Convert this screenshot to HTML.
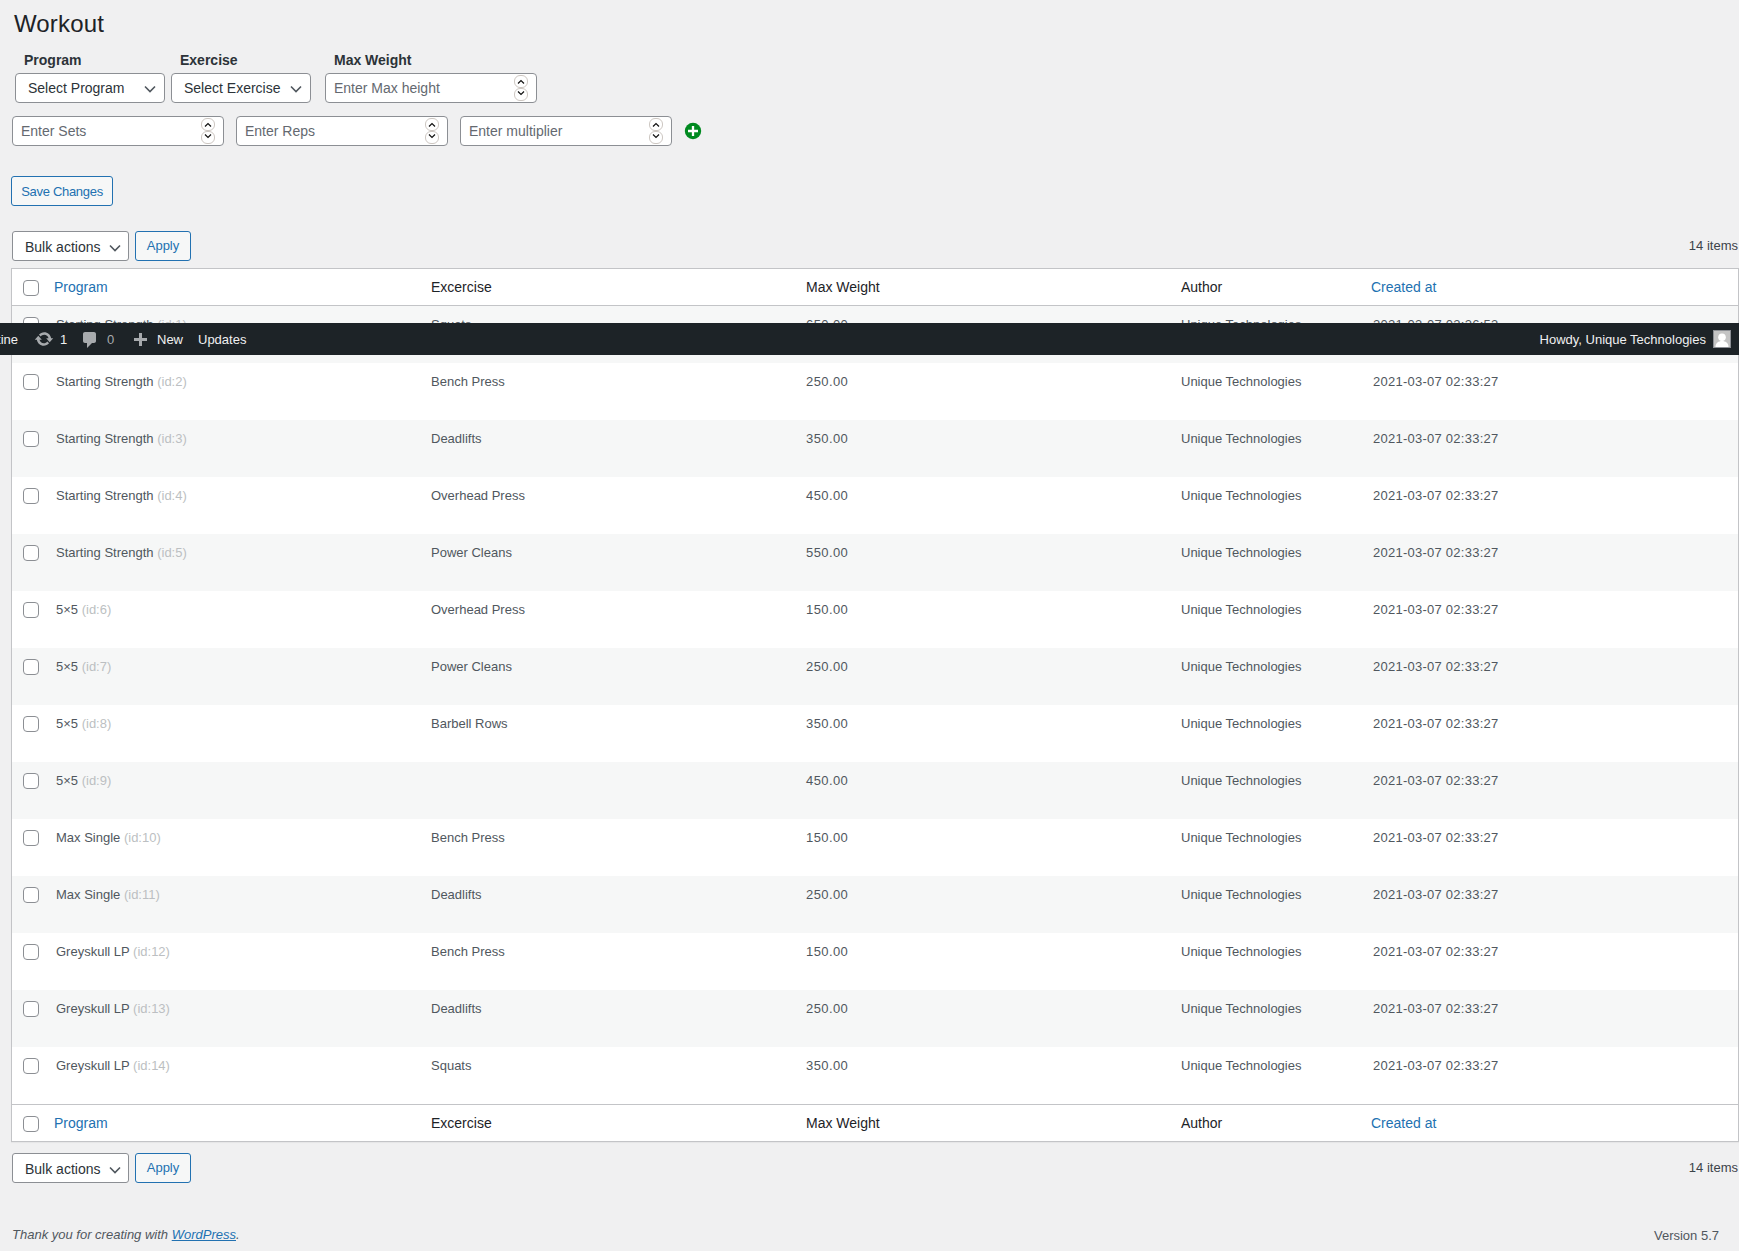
<!DOCTYPE html>
<html><head><meta charset="utf-8">
<style>
*{box-sizing:border-box;margin:0;padding:0}
html,body{width:1739px;height:1251px;overflow:hidden;background:#f0f0f1;font-family:"Liberation Sans",sans-serif;color:#3c434a;font-size:13px}
.abs{position:absolute}
h1{position:absolute;left:14px;top:9px;font-size:24px;letter-spacing:0.15px;font-weight:400;color:#1d2327;line-height:29px}
.lbl{position:absolute;top:51px;font-size:14px;font-weight:700;color:#2c3338;line-height:18px}
.sel{position:absolute;background:#fff;border:1px solid #8c8f94;border-radius:4px;color:#2c3338;font-size:14px;line-height:28px;padding-left:12px}
.sel svg{position:absolute;right:8px;top:11px}
.inp{position:absolute;background:#fff;border:1px solid #8c8f94;border-radius:4px;color:#646970;font-size:14px;line-height:28px;padding-left:8px}
.spin{position:absolute;width:14px;height:13px;border:1px solid #cdc7c2;border-radius:6px;background:#fff}
.spin svg{position:absolute;left:2px;top:3px}
.btn{position:absolute;border:1px solid #2271b1;border-radius:3px;background:#f6f7f7;color:#2271b1;font-size:13px;text-align:center}
.bulk{position:absolute;background:#fff;border:1px solid #8c8f94;border-radius:3px;color:#2c3338;font-size:14px;padding-left:12px;padding-top:2px}
.bulk svg{position:absolute;right:7px;top:12px}
.items{position:absolute;right:0;font-size:13px;color:#3c434a}
table{position:absolute;left:11px;width:1727px;border:1px solid #c3c4c7;border-collapse:collapse;background:#fff}
.hdr{position:absolute;left:11px;width:1727px;background:#fff;border:1px solid #c3c4c7}
.cb{position:absolute;width:16px;height:16px;border:1px solid #8c8f94;border-radius:4px;background:#fff}
.th{position:absolute;font-size:14px;color:#1d2327}
.th.a{color:#2271b1}
.row{position:absolute;left:12px;width:1726px;height:57px}
.row.s{background:#f6f7f7}
.td{position:absolute;font-size:13px;color:#50575e}
.id{color:#bcbfc2}
#adminbar{position:absolute;left:0;top:323px;width:1739px;height:32px;background:#1d2327;color:#f0f0f1;font-size:13px}
#adminbar .t{position:absolute;top:9px;line-height:16px}
.tbl{position:absolute;left:11px;width:1728px;background:#fff;border:1px solid #c3c4c7;box-shadow:0 1px 1px rgba(0,0,0,.04)}
.hline{position:absolute;left:12px;width:1726px;height:1px;background:#c3c4c7}
.row .cb{left:11px;top:11px}
.row .td{top:11px;line-height:16px}
.c1{left:44px}.c2{left:419px}.c3{left:794px;letter-spacing:0.4px}.c4{left:1169px}.c5{left:1361px;letter-spacing:0.25px}
.th{line-height:18px;margin-top:-1px}
</style></head><body>
<h1>Workout</h1>
<div class="lbl" style="left:24px">Program</div>
<div class="lbl" style="left:180px">Exercise</div>
<div class="lbl" style="left:334px">Max Weight</div>

<div class="sel" style="left:15px;top:73px;width:150px;height:30px">Select Program<svg width="12" height="8" viewBox="0 0 12 8"><path d="M1 1.5l5 5 5-5" fill="none" stroke="#50575e" stroke-width="1.6"/></svg></div>
<div class="sel" style="left:171px;top:73px;width:140px;height:30px">Select Exercise<svg width="12" height="8" viewBox="0 0 12 8"><path d="M1 1.5l5 5 5-5" fill="none" stroke="#50575e" stroke-width="1.6"/></svg></div>
<div class="inp" style="left:325px;top:73px;width:212px;height:30px">Enter Max height</div>

<div class="inp" style="left:12px;top:116px;width:212px;height:30px">Enter Sets</div>
<div class="inp" style="left:236px;top:116px;width:212px;height:30px">Enter Reps</div>
<div class="inp" style="left:460px;top:116px;width:212px;height:30px">Enter multiplier</div>

<div class="btn" style="left:11px;top:176px;width:102px;height:30px;line-height:29px;letter-spacing:-0.3px">Save Changes</div>

<div class="bulk" style="left:12px;top:231px;width:117px;height:30px;line-height:27px">Bulk actions<svg width="12" height="8" viewBox="0 0 12 8"><path d="M1 1.5l5 5 5-5" fill="none" stroke="#50575e" stroke-width="1.6"/></svg></div>
<div class="btn" style="left:135px;top:231px;width:56px;height:30px;line-height:28px">Apply</div>
<div class="items" style="top:238px;right:1px">14 items</div>


<div class="spin" style="left:201px;top:118px"><svg width="8" height="6" viewBox="0 0 8 6"><path d="M1 4.5l3-3 3 3" fill="none" stroke="#111" stroke-width="1.2"/></svg></div>
<div class="spin" style="left:201px;top:131px"><svg width="8" height="6" viewBox="0 0 8 6" style="top:1px"><path d="M1 1.5l3 3 3-3" fill="none" stroke="#111" stroke-width="1.2"/></svg></div>
<div class="spin" style="left:425px;top:118px"><svg width="8" height="6" viewBox="0 0 8 6"><path d="M1 4.5l3-3 3 3" fill="none" stroke="#111" stroke-width="1.2"/></svg></div>
<div class="spin" style="left:425px;top:131px"><svg width="8" height="6" viewBox="0 0 8 6" style="top:1px"><path d="M1 1.5l3 3 3-3" fill="none" stroke="#111" stroke-width="1.2"/></svg></div>
<div class="spin" style="left:649px;top:118px"><svg width="8" height="6" viewBox="0 0 8 6"><path d="M1 4.5l3-3 3 3" fill="none" stroke="#111" stroke-width="1.2"/></svg></div>
<div class="spin" style="left:649px;top:131px"><svg width="8" height="6" viewBox="0 0 8 6" style="top:1px"><path d="M1 1.5l3 3 3-3" fill="none" stroke="#111" stroke-width="1.2"/></svg></div>
<div class="spin" style="left:514px;top:75px"><svg width="8" height="6" viewBox="0 0 8 6"><path d="M1 4.5l3-3 3 3" fill="none" stroke="#111" stroke-width="1.2"/></svg></div>
<div class="spin" style="left:514px;top:88px"><svg width="8" height="6" viewBox="0 0 8 6" style="top:1px"><path d="M1 1.5l3 3 3-3" fill="none" stroke="#111" stroke-width="1.2"/></svg></div>
<svg class="abs" style="left:684px;top:122px" width="18" height="18" viewBox="0 0 18 18"><circle cx="9" cy="9" r="8.2" fill="#008a20"/><path d="M9 4v10M4 9h10" stroke="#fff" stroke-width="2.3"/></svg>

<div class="tbl" style="top:268px;height:874px"></div>
<div class="cb" style="left:23px;top:280px"></div>
<div class="th a" style="left:54px;top:279px">Program</div>
<div class="th" style="left:431px;top:279px">Excercise</div>
<div class="th" style="left:806px;top:279px">Max Weight</div>
<div class="th" style="left:1181px;top:279px">Author</div>
<div class="th a" style="left:1371px;top:279px">Created at</div>
<div class="hline" style="top:305px"></div>
<div class="row s" style="top:306px"><div class="cb"></div><div class="td c1">Starting Strength <span class="id">(id:1)</span></div><div class="td c2">Squats</div><div class="td c3">650.00</div><div class="td c4">Unique Technologies</div><div class="td c5">2021-03-07 02:26:53</div></div>
<div class="row" style="top:363px"><div class="cb"></div><div class="td c1">Starting Strength <span class="id">(id:2)</span></div><div class="td c2">Bench Press</div><div class="td c3">250.00</div><div class="td c4">Unique Technologies</div><div class="td c5">2021-03-07 02:33:27</div></div>
<div class="row s" style="top:420px"><div class="cb"></div><div class="td c1">Starting Strength <span class="id">(id:3)</span></div><div class="td c2">Deadlifts</div><div class="td c3">350.00</div><div class="td c4">Unique Technologies</div><div class="td c5">2021-03-07 02:33:27</div></div>
<div class="row" style="top:477px"><div class="cb"></div><div class="td c1">Starting Strength <span class="id">(id:4)</span></div><div class="td c2">Overhead Press</div><div class="td c3">450.00</div><div class="td c4">Unique Technologies</div><div class="td c5">2021-03-07 02:33:27</div></div>
<div class="row s" style="top:534px"><div class="cb"></div><div class="td c1">Starting Strength <span class="id">(id:5)</span></div><div class="td c2">Power Cleans</div><div class="td c3">550.00</div><div class="td c4">Unique Technologies</div><div class="td c5">2021-03-07 02:33:27</div></div>
<div class="row" style="top:591px"><div class="cb"></div><div class="td c1">5×5 <span class="id">(id:6)</span></div><div class="td c2">Overhead Press</div><div class="td c3">150.00</div><div class="td c4">Unique Technologies</div><div class="td c5">2021-03-07 02:33:27</div></div>
<div class="row s" style="top:648px"><div class="cb"></div><div class="td c1">5×5 <span class="id">(id:7)</span></div><div class="td c2">Power Cleans</div><div class="td c3">250.00</div><div class="td c4">Unique Technologies</div><div class="td c5">2021-03-07 02:33:27</div></div>
<div class="row" style="top:705px"><div class="cb"></div><div class="td c1">5×5 <span class="id">(id:8)</span></div><div class="td c2">Barbell Rows</div><div class="td c3">350.00</div><div class="td c4">Unique Technologies</div><div class="td c5">2021-03-07 02:33:27</div></div>
<div class="row s" style="top:762px"><div class="cb"></div><div class="td c1">5×5 <span class="id">(id:9)</span></div><div class="td c2"></div><div class="td c3">450.00</div><div class="td c4">Unique Technologies</div><div class="td c5">2021-03-07 02:33:27</div></div>
<div class="row" style="top:819px"><div class="cb"></div><div class="td c1">Max Single <span class="id">(id:10)</span></div><div class="td c2">Bench Press</div><div class="td c3">150.00</div><div class="td c4">Unique Technologies</div><div class="td c5">2021-03-07 02:33:27</div></div>
<div class="row s" style="top:876px"><div class="cb"></div><div class="td c1">Max Single <span class="id">(id:11)</span></div><div class="td c2">Deadlifts</div><div class="td c3">250.00</div><div class="td c4">Unique Technologies</div><div class="td c5">2021-03-07 02:33:27</div></div>
<div class="row" style="top:933px"><div class="cb"></div><div class="td c1">Greyskull LP <span class="id">(id:12)</span></div><div class="td c2">Bench Press</div><div class="td c3">150.00</div><div class="td c4">Unique Technologies</div><div class="td c5">2021-03-07 02:33:27</div></div>
<div class="row s" style="top:990px"><div class="cb"></div><div class="td c1">Greyskull LP <span class="id">(id:13)</span></div><div class="td c2">Deadlifts</div><div class="td c3">250.00</div><div class="td c4">Unique Technologies</div><div class="td c5">2021-03-07 02:33:27</div></div>
<div class="row" style="top:1047px"><div class="cb"></div><div class="td c1">Greyskull LP <span class="id">(id:14)</span></div><div class="td c2">Squats</div><div class="td c3">350.00</div><div class="td c4">Unique Technologies</div><div class="td c5">2021-03-07 02:33:27</div></div>
<div class="hline" style="top:1104px"></div>
<div class="cb" style="left:23px;top:1116px"></div>
<div class="th a" style="left:54px;top:1115px">Program</div>
<div class="th" style="left:431px;top:1115px">Excercise</div>
<div class="th" style="left:806px;top:1115px">Max Weight</div>
<div class="th" style="left:1181px;top:1115px">Author</div>
<div class="th a" style="left:1371px;top:1115px">Created at</div>

<div id="adminbar">
<div class="t" style="right:1721px">tine</div>
<svg class="abs" style="left:34px;top:6px" width="20" height="20" viewBox="0 0 20 20"><path fill="#a7aaad" d="M10.2 3.28c3.53 0 6.43 2.61 6.92 6h2.08l-3.5 4-3.5-4h2.32c-.45-1.970-2.210-3.450-4.320-3.450-1.450 0-2.730.71-3.540 1.780L4.950 5.660C6.230 4.200 8.110 3.280 10.200 3.280zm-.4 13.440c-3.520 0-6.430-2.610-6.920-6H.8l3.5-4c1.170 1.330 2.330 2.670 3.500 4H5.480c.450 1.970 2.210 3.450 4.320 3.450 1.450 0 2.730-.710 3.540-1.780l1.710 1.950c-1.280 1.460-3.150 2.380-5.250 2.380z"/></svg>
<div class="t" style="left:60px">1</div>
<svg class="abs" style="left:80px;top:7px" width="20" height="20" viewBox="0 0 20 20"><path fill="#a7aaad" d="M5 2h9c1.1 0 2 .9 2 2v7c0 1.1-.9 2-2 2h-2l-5 5v-5H5c-1.1 0-2-.9-2-2V4c0-1.1.9-2 2-2z"/></svg>
<div class="t" style="left:107px;color:#a7aaad">0</div>
<svg class="abs" style="left:130px;top:8px" width="20" height="20" viewBox="0 0 20 20"><path fill="#a7aaad" d="M17 7v3h-5v5H9v-5H4V7h5V2h3v5h5z"/></svg>
<div class="t" style="left:157px">New</div>
<div class="t" style="left:198px">Updates</div>
<div class="t" style="right:33px">Howdy, Unique Technologies</div>
<div class="abs" style="left:1713px;top:7px;width:18px;height:18px;background:#c4c4c4;border:1px solid #8c8f94;overflow:hidden"><svg width="16" height="16" viewBox="0 0 16 16" style="position:absolute;left:0;top:0"><circle cx="8" cy="6.2" r="3.8" fill="#fff"/><path d="M1.5 16c0-4 3-6 6.5-6s6.5 2 6.5 6z" fill="#fff"/></svg></div>
</div>

<div class="bulk" style="left:12px;top:1153px;width:117px;height:30px;line-height:27px">Bulk actions<svg width="12" height="8" viewBox="0 0 12 8"><path d="M1 1.5l5 5 5-5" fill="none" stroke="#50575e" stroke-width="1.6"/></svg></div>
<div class="btn" style="left:135px;top:1153px;width:56px;height:30px;line-height:28px">Apply</div>
<div class="items" style="top:1160px;right:1px">14 items</div>

<div class="abs" style="left:12px;top:1227px;font-style:italic;color:#50575e;font-size:13px">Thank you for creating with <span style="color:#2271b1;text-decoration:underline">WordPress</span>.</div>
<div class="abs" style="right:20px;top:1228px;color:#50575e;font-size:13px">Version 5.7</div>
</body></html>
